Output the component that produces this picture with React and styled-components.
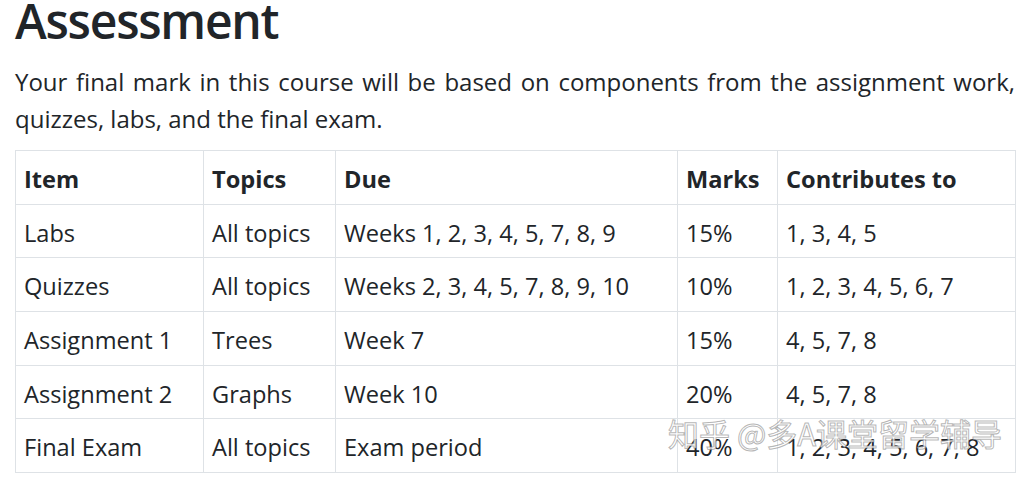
import React from "react";
import styled, { createGlobalStyle } from "styled-components";

const Global = createGlobalStyle`
  html, body { margin: 0; padding: 0; background: #ffffff; }
  body { font-family: "Open Sans", "Noto Sans", sans-serif; color: #212529; }
`;

const Page = styled.div`
  position: relative;
  width: 1000px;
  padding: 0 10px 0 15px;
`;

const Title = styled.h1`
  margin: -3px 0 0;
  font-size: 48px;
  line-height: 48px;
  font-weight: 600;
  letter-spacing: -1.25px;
  color: #212529;
`;

const Lead = styled.p`
  margin: 18px 0 0;
  font-size: 24px;
  line-height: 37px;
  text-align: justify;
`;

const Table = styled.table`
  margin-top: 13px;
  width: 1000px;
  border-collapse: collapse;
  table-layout: fixed;
  font-size: 23.6px;
`;

const Cell = styled.td`
  border: 1px solid #dee2e6;
  padding: 10px 8px 6.67px;
  line-height: 36px;
  text-align: left;
  vertical-align: top;
  white-space: nowrap;
  font-weight: ${(p) => (p.$head ? 700 : 400)};
`;

const Watermark = styled.div`
  position: absolute;
  left: 668px;
  top: 414px;
  font-family: "Noto Sans CJK SC", "Open Sans", sans-serif;
  font-size: 31px;
  line-height: 44px;
  color: rgba(255, 255, 255, 0.75);
  -webkit-text-stroke: 1px rgba(120, 120, 120, 0.55);
  pointer-events: none;
  white-space: nowrap;
`;

const widths = [188, 132, 342, 100, 238];
const headers = ["Item", "Topics", "Due", "Marks", "Contributes to"];
const rows = [
  ["Labs", "All topics", "Weeks 1, 2, 3, 4, 5, 7, 8, 9", "15%", "1, 3, 4, 5"],
  ["Quizzes", "All topics", "Weeks 2, 3, 4, 5, 7, 8, 9, 10", "10%", "1, 2, 3, 4, 5, 6, 7"],
  ["Assignment 1", "Trees", "Week 7", "15%", "4, 5, 7, 8"],
  ["Assignment 2", "Graphs", "Week 10", "20%", "4, 5, 7, 8"],
  ["Final Exam", "All topics", "Exam period", "40%", "1, 2, 3, 4, 5, 6, 7, 8"],
];

export default function App() {
  return (
    <>
      <Global />
      <Page>
        <Title>Assessment</Title>
        <Lead>
          Your final mark in this course will be based on components from the assignment work,
          quizzes, labs, and the final exam.
        </Lead>
        <Table>
          <colgroup>
            {widths.map((w, i) => (
              <col key={i} style={{ width: w }} />
            ))}
          </colgroup>
          <thead>
            <tr>
              {headers.map((h) => (
                <Cell as="th" $head key={h}>
                  {h}
                </Cell>
              ))}
            </tr>
          </thead>
          <tbody>
            {rows.map((r) => (
              <tr key={r[0]}>
                {r.map((c, i) => (
                  <Cell key={i}>{c}</Cell>
                ))}
              </tr>
            ))}
          </tbody>
        </Table>
        <Watermark>知乎 @多A课堂留学辅导</Watermark>
      </Page>
    </>
  );
}
